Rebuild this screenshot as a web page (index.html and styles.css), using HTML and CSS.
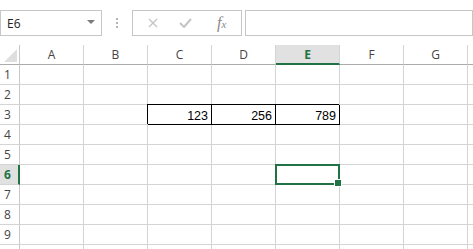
FILE: index.html
```html
<!DOCTYPE html>
<html lang="en">
<head>
    <meta charset="UTF-8">
    <meta name="viewport" content="width=device-width, initial-scale=1.0">
    <title>Book1 - Excel</title>
    <link rel="stylesheet" href="styles.css">
</head>
<body>
    <div class="formula-bar">
        <div class="name-box">
            <span>E6</span>
            <span class="arrow"></span>
        </div>
        <div class="grip"><i></i><i></i><i></i></div>
        <div class="fx-box">
            <svg class="icon-x" width="10" height="10" viewBox="0 0 10 10">
                <path d="M1 1 L9 9 M9 1 L1 9" stroke="#c4c4c4" stroke-width="1.3" fill="none"/>
            </svg>
            <svg class="icon-check" width="13" height="10" viewBox="0 0 13 10">
                <path d="M1 5 L5 9 L12 1" stroke="#c4c4c4" stroke-width="2" fill="none"/>
            </svg>
            <span class="fx">f<sub>x</sub></span>
        </div>
        <div class="formula-input"></div>
    </div>

    <div class="sheet">
        <div class="corner"></div>
        <div class="col">A</div><div class="col">B</div><div class="col">C</div><div class="col">D</div>
        <div class="col active">E</div><div class="col">F</div><div class="col">G</div><div class="col"></div>

        <div class="row">1</div>
        <div class="cell"></div><div class="cell"></div><div class="cell"></div><div class="cell"></div>
        <div class="cell"></div><div class="cell"></div><div class="cell"></div><div class="cell"></div>

        <div class="row">2</div>
        <div class="cell"></div><div class="cell"></div><div class="cell"></div><div class="cell"></div>
        <div class="cell"></div><div class="cell"></div><div class="cell"></div><div class="cell"></div>

        <div class="row">3</div>
        <div class="cell"></div><div class="cell"></div>
        <div class="cell num boxed">123</div><div class="cell num boxed">256</div><div class="cell num boxed">789</div>
        <div class="cell"></div><div class="cell"></div><div class="cell"></div>

        <div class="row">4</div>
        <div class="cell"></div><div class="cell"></div><div class="cell"></div><div class="cell"></div>
        <div class="cell"></div><div class="cell"></div><div class="cell"></div><div class="cell"></div>

        <div class="row">5</div>
        <div class="cell"></div><div class="cell"></div><div class="cell"></div><div class="cell"></div>
        <div class="cell"></div><div class="cell"></div><div class="cell"></div><div class="cell"></div>

        <div class="row active">6</div>
        <div class="cell"></div><div class="cell"></div><div class="cell"></div><div class="cell"></div>
        <div class="cell selected"></div><div class="cell"></div><div class="cell"></div><div class="cell"></div>

        <div class="row">7</div>
        <div class="cell"></div><div class="cell"></div><div class="cell"></div><div class="cell"></div>
        <div class="cell"></div><div class="cell"></div><div class="cell"></div><div class="cell"></div>

        <div class="row">8</div>
        <div class="cell"></div><div class="cell"></div><div class="cell"></div><div class="cell"></div>
        <div class="cell"></div><div class="cell"></div><div class="cell"></div><div class="cell"></div>

        <div class="row">9</div>
        <div class="cell"></div><div class="cell"></div><div class="cell"></div><div class="cell"></div>
        <div class="cell"></div><div class="cell"></div><div class="cell"></div><div class="cell"></div>

        <div class="row"></div>
        <div class="cell"></div><div class="cell"></div><div class="cell"></div><div class="cell"></div>
        <div class="cell"></div><div class="cell"></div><div class="cell"></div><div class="cell"></div>
    </div>
</body>
</html>
```

FILE: styles.css
```css
*{
    margin: 0px;
    padding: 0px;
    box-sizing: border-box;
}
body{
    background: #fff;
    font-family: "Open Sans", "Liberation Sans", sans-serif;
    width: 473px;
    height: 249px;
    overflow: hidden;
}

/* formula bar */
.formula-bar{
    display: flex;
    align-items: flex-start;
    height: 45px;
    padding-top: 10px;
}
.name-box{
    width: 102px;
    height: 26px;
    border: 1px solid #c6c6c6;
    display: flex;
    align-items: center;
    justify-content: space-between;
    padding: 0 6px 0 6px;
    font-size: 12px;
    color: #222;
}
.arrow{
    width: 0;
    height: 0;
    border-left: 4px solid transparent;
    border-right: 4px solid transparent;
    border-top: 4px solid #7a7a7a;
    margin-top: -2px;
}
.grip{
    width: 30px;
    display: flex;
    flex-direction: column;
    align-items: center;
    gap: 2px;
    padding-top: 8px;
}
.grip i{
    display: block;
    width: 2px;
    height: 2px;
    background: #b4b4b4;
}
.fx-box{
    width: 110px;
    height: 26px;
    border: 1px solid #c6c6c6;
    display: flex;
    align-items: center;
    padding-left: 15px;
}
.icon-check{
    margin-left: 21px;
}
.fx{
    margin-left: 25px;
    font-family: "Liberation Serif", serif;
    font-style: italic;
    font-size: 16px;
    color: #8a8a8a;
    line-height: 1;
}
.fx sub{
    font-size: 11px;
    vertical-align: 0;
}
.formula-input{
    flex: 1;
    margin-left: 3px;
    height: 26px;
    border: 1px solid #c6c6c6;
}

/* grid */
.sheet{
    display: grid;
    grid-template-columns: 20px repeat(8, 64px);
    grid-auto-rows: 20px;
    color: #444;
}
.corner{
    position: relative;
    border-right: 1px solid #c8c8c8;
    border-bottom: 1px solid #ababab;
}
.corner::after{
    content: "";
    position: absolute;
    right: 2px;
    bottom: 2px;
    border-left: 13px solid transparent;
    border-bottom: 13px solid #dfdfdf;
}
.col{
    border-right: 1px solid #d4d4d4;
    border-bottom: 1px solid #ababab;
    text-align: center;
    font-size: 12px;
    line-height: 19px;
}
.col.active{
    background: #e1e1e1;
    color: #217346;
    font-weight: bold;
    border-bottom: 2px solid #217346;
}
.row{
    border-right: 1px solid #c8c8c8;
    border-bottom: 1px solid #d4d4d4;
    font-size: 12px;
    line-height: 20px;
    padding-left: 4px;
}
.row.active{
    background: #e1e1e1;
    color: #217346;
    font-weight: bold;
    border-right: 2px solid #217346;
}
.cell{
    border-right: 1px solid #d4d4d4;
    border-bottom: 1px solid #d4d4d4;
}
.num{
    font-family: "Liberation Sans", Arial, sans-serif;
    font-size: 12.5px;
    line-height: 20px;
    padding-top: 1px;
    padding-right: 3px;
    text-align: right;
    color: #000;
}
.boxed{
    border-right-color: #000;
    border-bottom-color: #000;
    box-shadow: -1px -1px 0 #000;
}
.selected{
    position: relative;
    z-index: 1;
}
.selected::before{
    content: "";
    position: absolute;
    top: -1px;
    left: -1px;
    right: -1px;
    bottom: -1px;
    border: 2px solid #217346;
}
.selected::after{
    content: "";
    position: absolute;
    right: -3px;
    bottom: -3px;
    width: 6px;
    height: 6px;
    background: #217346;
    border: 1px solid #fff;
}
```
